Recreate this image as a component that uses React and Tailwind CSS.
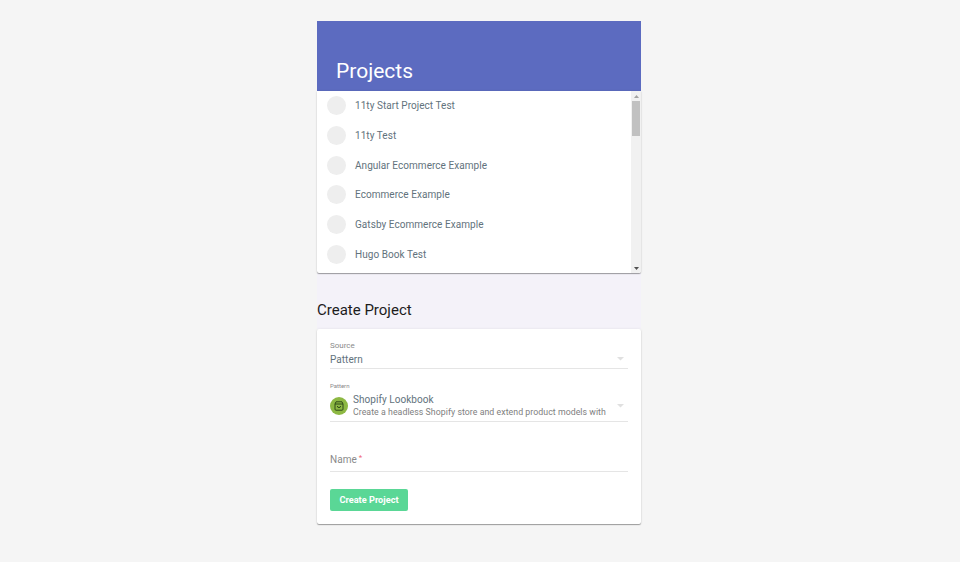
const items = ["11ty Start Project Test","11ty Test","Angular Ecommerce Example","Ecommerce Example","Gatsby Ecommerce Example","Hugo Book Test"];
const Caret = () => <svg width="7" height="4" viewBox="0 0 7 4" className="shrink-0"><path d="M0 0h7L3.5 3.5z" fill="#e0e0e0"/></svg>;
export default function App() {
  return (
    <div className="min-h-[562px] bg-[#f5f5f5] pt-[21px] font-['Roboto',sans-serif]">
      <div className="ml-[317px] w-[324px]">
        <div className="bg-[#5c6bc0] h-[70px] pl-[19px] pt-[36px] text-[21px] leading-[28px] text-white">Projects</div>
        <div className="flex h-[182px] bg-white rounded-b-[2px] shadow-[0_1px_1px_rgba(0,0,0,0.35),0_0_3px_rgba(0,0,0,0.08)] overflow-hidden relative">
          <div className="flex-1 flex flex-col">
            {items.map(t => (
              <div key={t} className="flex items-center h-[29.65px] pl-[10px] gap-[9px] shrink-0">
                <div className="size-[19px] rounded-full bg-[#eeeeee]"/>
                <div className="text-[10px] tracking-[0.05px] text-[#62727c]">{t}</div>
              </div>
            ))}
          </div>
          <div className="w-[10px] bg-[#f1f1f1] flex flex-col items-center">
            <div className="h-[10px] flex items-center justify-center"><svg width="5" height="3" viewBox="0 0 5 3"><path d="M0 3h5L2.5 0z" fill="#a3a3a3"/></svg></div>
            <div className="w-[8px] h-[35px] bg-[#c1c1c1]"/>
            <div className="flex-1"/>
            <div className="h-[10px] flex items-center justify-center"><svg width="5" height="3" viewBox="0 0 5 3"><path d="M0 0h5L2.5 3z" fill="#505050"/></svg></div>
          </div>
        </div>
        <div className="bg-[#f4f2f9] h-[56px] flex items-center pt-[18px] text-[15px] text-[#1c1c1c]">Create Project</div>
        <div className="bg-white h-[195px] rounded-[2px] shadow-[0_1px_1px_rgba(0,0,0,0.35),0_0_3px_rgba(0,0,0,0.08)] px-[13px] pt-[12px]">
          <div className="text-[8px] leading-[9px] text-[#8a8a8a]">Source</div>
          <div className="flex items-center justify-between h-[16px] border-b border-[#e5e5e5] pr-[4px] mt-[1px] box-content pb-[1px]">
            <span className="text-[10px] tracking-[0.05px] text-[#62727c]">Pattern</span><Caret/>
          </div>
          <div className="mt-[13px] text-[6px] leading-[8px] text-[#8a8a8a]">Pattern</div>
          <div className="flex items-center h-[31px] border-b border-[#e5e5e5] pr-[4px] mt-[1px]">
            <div className="size-[18px] rounded-full bg-[#8db843] flex items-center justify-center shrink-0">
              <svg width="10" height="10" viewBox="0 0 10 10" fill="none" stroke="#2f4a18" strokeWidth="1"><path d="M1 3 2 .8h6L9 3v5.2a1 1 0 0 1-1 1H2a1 1 0 0 1-1-1zM1 3h8M3.4 5a1.6 1.6 0 0 0 3.2 0"/></svg>
            </div>
            <div className="ml-[5px] flex-1 min-w-0">
              <div className="text-[10px] leading-[13px] tracking-[0.05px] text-[#62727c]">Shopify Lookbook</div>
              <div className="text-[8.75px] leading-[13px] tracking-[0.05px] text-[#808080] whitespace-nowrap">Create a headless Shopify store and extend product models with</div>
            </div>
            <Caret/>
          </div>
          <div className="mt-[30px] flex items-end h-[20px] border-b border-[#e5e5e5] pb-[4px] text-[10px] tracking-[0.05px] text-[#8a8a8a]">Name<span className="ml-[2px] text-[8px] text-[#f06a7a] self-start">*</span></div>
          <button className="mt-[17px] block w-[78px] h-[22px] rounded-[2px] bg-[#5ad796] text-white text-[9.2px] font-bold">Create Project</button>
        </div>
      </div>
    </div>
  );
}
